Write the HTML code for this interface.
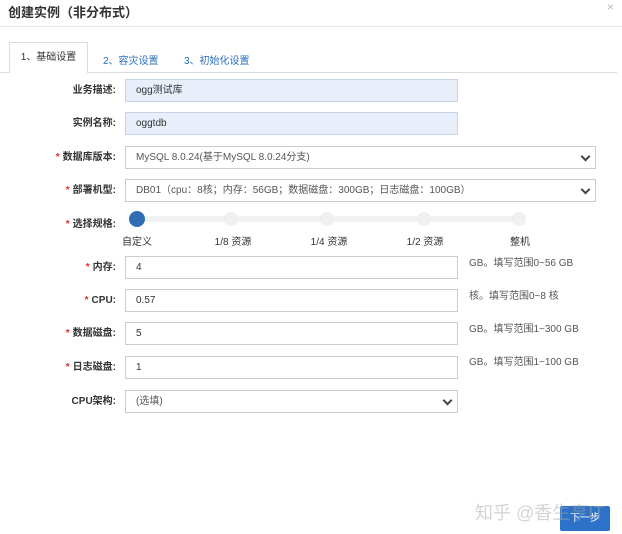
<!DOCTYPE html><html><head><meta charset="utf-8"><style>
*{margin:0;padding:0;box-sizing:border-box}
body{width:622px;height:534px;background:#fff;font-family:"Liberation Sans","Noto Sans CJK SC",sans-serif;font-size:10px;color:#333;position:relative;overflow:hidden}
.a{position:absolute}
.t{left:8px;top:2px;font-size:13px;font-weight:bold;color:#333}
.in{position:absolute;left:125px;width:333px;height:23px;border:1px solid #ccc;padding-left:10px;display:flex;align-items:center;font-size:10px;line-height:1;color:#333;background:#fff}
.bl{background:#e8effb;border-color:#c7d3e6}
.lb{position:absolute;right:506px;font-size:10px;font-weight:bold;color:#333;text-align:right;white-space:nowrap;line-height:1}
.lb i{color:#d33;font-style:normal;margin-right:3px}
.hint{position:absolute;left:469px;font-size:10px;color:#555;line-height:1}
.ar{position:absolute;right:6px;top:6px;width:7px;height:7px;border-right:2px solid #444;border-bottom:2px solid #444;transform:rotate(45deg)}
.kn{position:absolute;top:212px;width:14px;height:14px;border-radius:50%;background:#f0f0f0;border:1px solid #eee}
.sl{position:absolute;top:233px;font-size:10px;color:#333;transform:translateX(-50%);white-space:nowrap}
</style></head><body>
<div class="a t">创建实例（非分布式）</div>
<div class="a" style="right:8px;top:0;color:#bbb;font-size:12px">×</div>
<div class="a" style="left:0;top:26px;width:622px;height:1px;background:#e5e5e5"></div>
<div class="a" style="left:0;top:72px;width:617px;height:1px;background:#ddd"></div>
<div class="a" style="left:9px;top:42px;width:79px;height:31px;border:1px solid #ddd;border-bottom:none;background:#fff;font-size:10px;line-height:30px;text-align:center;color:#333">1、基础设置</div>
<div class="a" style="left:103px;top:52px;color:#2a6fc0;font-size:10px">2、容灾设置</div>
<div class="a" style="left:184px;top:52px;color:#2a6fc0;font-size:10px">3、初始化设置</div>

<div class="lb" style="top:86px">业务描述:</div><div class="in bl" style="top:79px">ogg测试库</div>
<div class="lb" style="top:119px">实例名称:</div><div class="in bl" style="top:112px">oggtdb</div>
<div class="lb" style="top:153px"><i>*</i>数据库版本:</div><div class="in" style="top:146px;width:471px;color:#555">MySQL 8.0.24(基于MySQL 8.0.24分支)<span class="ar"></span></div>
<div class="lb" style="top:186px"><i>*</i>部署机型:</div><div class="in" style="top:179px;width:471px;color:#555">DB01（cpu：8核；内存：56GB；数据磁盘：300GB；日志磁盘：100GB）<span class="ar"></span></div>
<div class="lb" style="top:220px"><i>*</i>选择规格:</div>
<div class="a" style="left:137px;top:216px;width:384px;height:6px;background:#f2f2f2;border-radius:3px"></div>
<div class="kn" style="left:224px"></div><div class="kn" style="left:320px"></div><div class="kn" style="left:417px"></div><div class="kn" style="left:512px"></div>
<div class="a" style="left:129px;top:211px;width:16px;height:16px;border-radius:50%;background:#2f6db5"></div>
<div class="sl" style="left:137px">自定义</div><div class="sl" style="left:233px">1/8 资源</div><div class="sl" style="left:329px">1/4 资源</div><div class="sl" style="left:425px">1/2 资源</div><div class="sl" style="left:520px">整机</div>
<div class="lb" style="top:263px"><i>*</i>内存:</div><div class="in" style="top:256px">4</div><div class="hint" style="top:259px">GB。填写范围0~56 GB</div>
<div class="lb" style="top:296px"><i>*</i>CPU:</div><div class="in" style="top:289px">0.57</div><div class="hint" style="top:292px">核。填写范围0~8 核</div>
<div class="lb" style="top:329px"><i>*</i>数据磁盘:</div><div class="in" style="top:322px">5</div><div class="hint" style="top:325px">GB。填写范围1~300 GB</div>
<div class="lb" style="top:363px"><i>*</i>日志磁盘:</div><div class="in" style="top:356px">1</div><div class="hint" style="top:358px">GB。填写范围1~100 GB</div>
<div class="lb" style="top:397px">CPU架构:</div><div class="in" style="top:390px;color:#555">(选填)<span class="ar"></span></div>
<div class="a" style="left:560px;top:506px;width:50px;height:25px;background:#2d72c9;border-radius:2px;color:#fff;font-size:10px;text-align:center;line-height:25px">下一步</div>
<div class="a" style="left:475px;top:499px;font-size:18px;color:rgba(170,170,170,.5);white-space:nowrap">知乎 @香生亨IT</div>
</body></html>
